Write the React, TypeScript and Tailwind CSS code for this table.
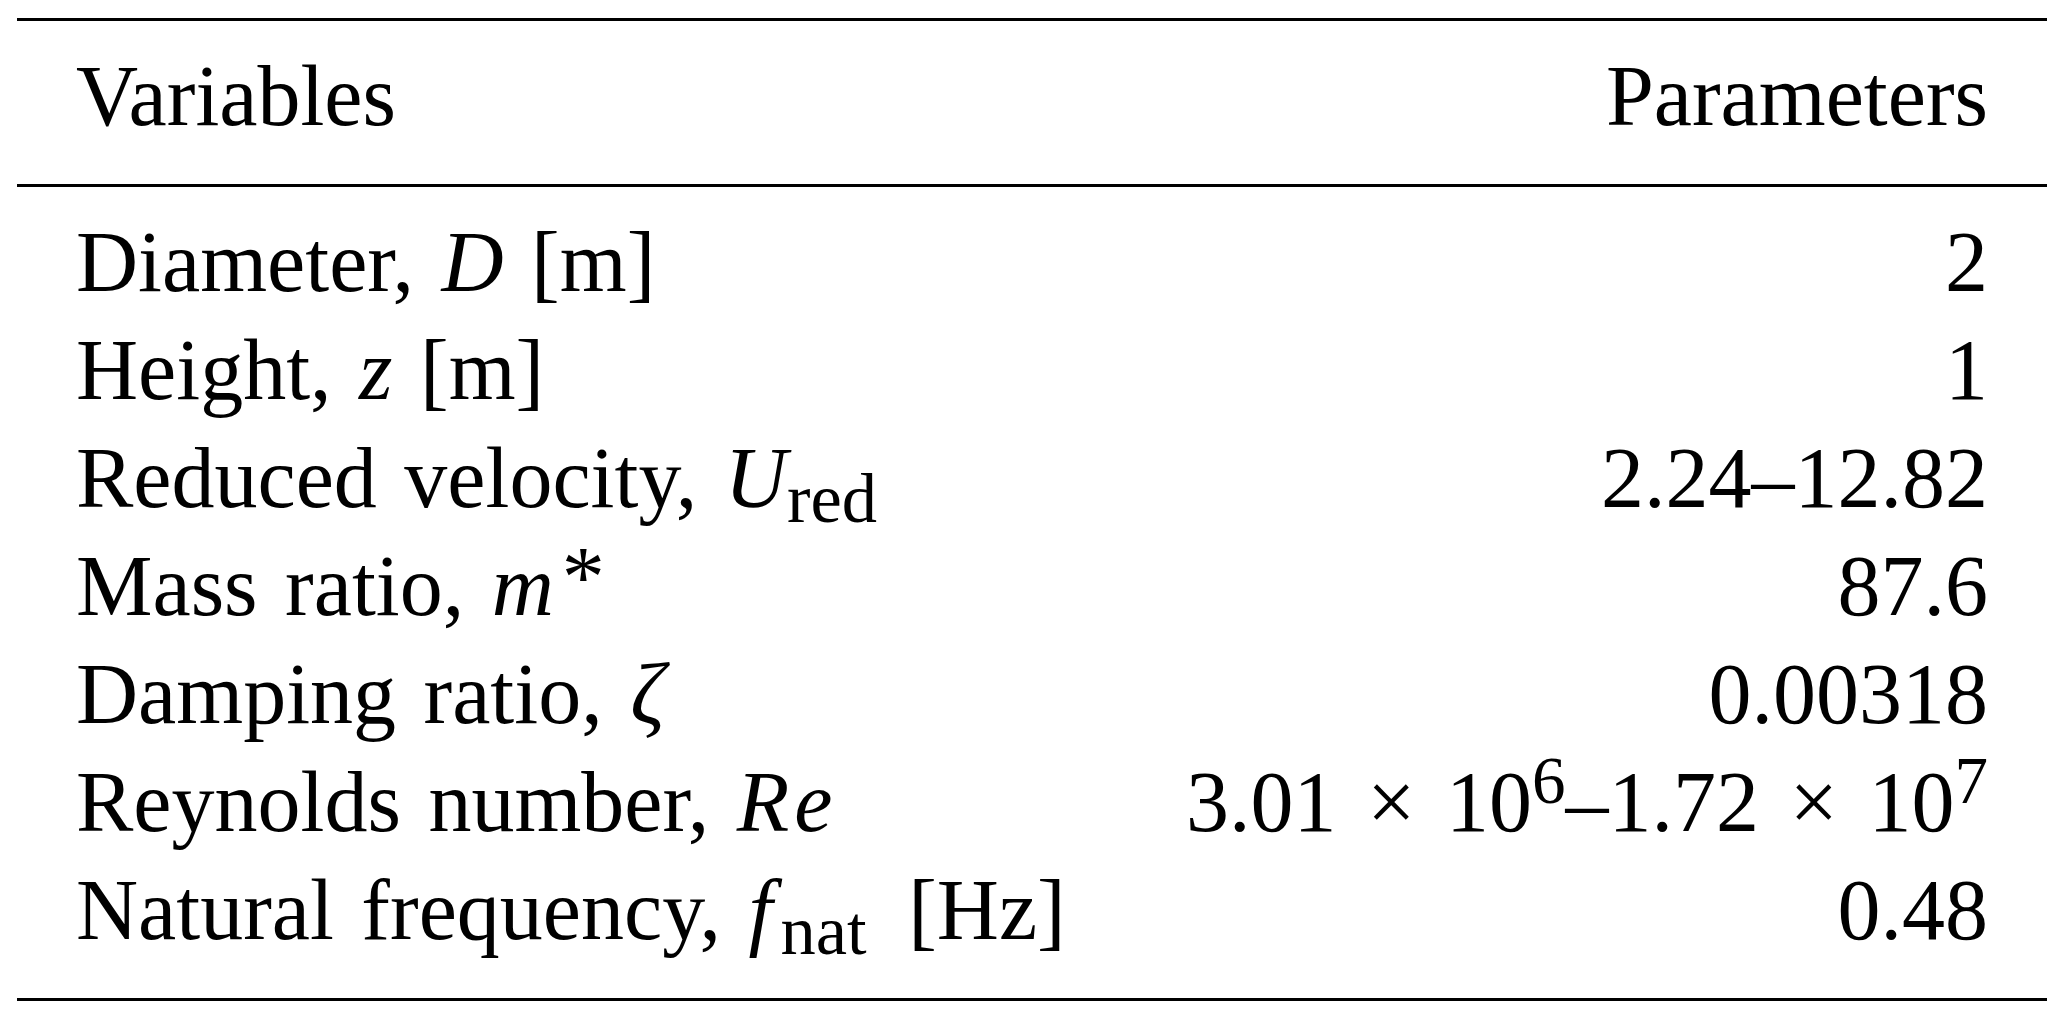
import React from "react";

type Row = {
    label: React.ReactNode;
    value: React.ReactNode;
};

// petits helpers pour indices / exposants
const Sub = ({children, className = ""}: { children: React.ReactNode; className?: string }) => (
    <span className={`relative top-[15px] text-[0.82em] leading-none ${className}`}>{children}</span>
);
const Sup = ({children}: { children: React.ReactNode }) => (
    <span className="relative -top-[28px] text-[0.78em] leading-none">{children}</span>
);
const Times = () => <span className="mx-[9px]">×</span>;

const rows: Row[] = [
    {label: <>Diameter, <i>D</i> [m]</>, value: "2"},
    {label: <>Height, <i>z</i> [m]</>, value: "1"},
    {label: <>Reduced velocity, <i>U</i><Sub>red</Sub></>, value: "2.24–12.82"},
    {label: <>Mass ratio, <i>m</i><span className="relative -top-[9px] ml-[8px]">*</span></>, value: "87.6"},
    {label: <>Damping ratio, <i>ζ</i></>, value: "0.00318"},
    {label: <>Reynolds number, <i>R<span className="ml-[5px]">e</span></i></>, value: <>3.01 <Times/> 10<Sup>6</Sup>–1.72 <Times/> 10<Sup>7</Sup></>},
    {label: <>Natural frequency, <i>f</i><Sub className="ml-[8px] mr-[14px]">nat</Sub> [Hz]</>, value: "0.48"},
];

export default function App() {
    return (
        <div className="min-h-screen bg-white pt-[18px] pl-[17px] pr-[20px] font-['Liberation_Serif',serif] text-[86px] text-black">
            {/* top rule */}
            <div className="border-t-[3px] border-black"/>

            {/* header */}
            <div className="mt-[21px] mb-[34px] flex justify-between px-[59px] leading-[108px]">
                <span>Variables</span>
                <span>Parameters</span>
            </div>

            {/* mid rule */}
            <div className="border-t-[3px] border-black"/>

            <div className="mt-[21px] mb-[34px]">
                {rows.map((row, i) => (
                    <div key={i} className="flex justify-between px-[59px] leading-[108px] whitespace-nowrap">
                        <span className="[word-spacing:6px]">{row.label}</span>
                        <span>{row.value}</span>
                    </div>
                ))}
            </div>

            {/* bottom rule */}
            <div className="border-t-[3px] border-black"/>
        </div>
    );
}
